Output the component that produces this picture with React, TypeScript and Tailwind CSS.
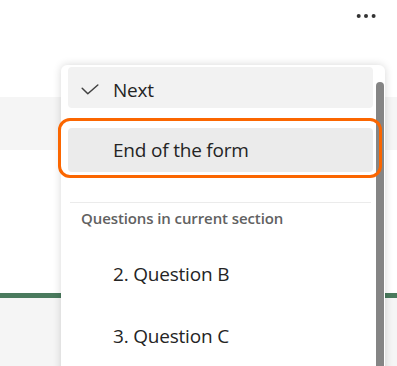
import React from "react";

function Check() {
  return (
    <svg width="18" height="12" viewBox="0 0 18 12" fill="none">
      <path d="M1.2 4.2 L6.8 9.8 L16.8 1" stroke="#424242" strokeWidth="1.5" strokeLinecap="round" strokeLinejoin="round" />
    </svg>
  );
}

export default function App() {
  return (
    <div className="relative w-[397px] h-[366px] overflow-hidden bg-white font-['Open_Sans',sans-serif]">
      <div className="flex flex-col h-full">
        <div className="h-[97px] bg-white flex justify-end pr-[21px] pt-[13px]">
          <svg width="20" height="6" viewBox="0 0 20 6">
            <circle cx="2.7" cy="3" r="2" fill="#333" />
            <circle cx="10" cy="3" r="2" fill="#333" />
            <circle cx="17.6" cy="3" r="2" fill="#333" />
          </svg>
        </div>
        <div className="h-[53px] bg-[#f5f5f5]" />
        <div className="h-[143px] bg-white" />
        <div className="h-[5px] bg-[#4a7a5d]" />
        <div className="flex-1 bg-[#f5f5f5]" />
      </div>

      <div className="absolute left-[61px] top-[65px] w-[324px] h-[320px] bg-white rounded-[6px] shadow-[0_0_9px_rgba(0,0,0,0.16)] flex">
        <div className="w-[315px] flex flex-col pt-[2px] pl-[7px] pr-[3px]">
          <div className="h-[41px] rounded-[4px] bg-[#f2f2f2] flex items-center pl-[13px] pt-[5px] gap-[14px]">
            <Check />
            <span className="text-[19px] text-[#242424] tracking-[-0.2px]">Next</span>
          </div>
          <div className="mt-[20px] h-[44px] rounded-[4px] bg-[#ebebeb] flex items-center pl-[45px]">
            <span className="text-[19px] text-[#242424] tracking-[-0.2px]">End of the form</span>
          </div>
          <div className="mt-[30px] mx-[2px] h-px bg-[#ebebeb]" />
          <div className="h-[31px] flex items-center pl-[13px]">
            <span className="text-[15px] font-semibold text-[#616161] tracking-[-0.1px]">Questions in current section</span>
          </div>
          <div className="mt-[9px] h-[62px] flex items-center pl-[45px]">
            <span className="text-[19px] text-[#242424] tracking-[-0.2px]">2. Question B</span>
          </div>
          <div className="h-[62px] flex items-center pl-[45px]">
            <span className="text-[19px] text-[#242424] tracking-[-0.2px]">3. Question C</span>
          </div>
        </div>
        <div className="w-[8px] pt-[17px]">
          <div className="w-full h-full rounded-t-[4px] bg-[#858585]" />
        </div>

        <div className="absolute left-[-3px] top-[53px] w-[324px] h-[60px] rounded-[12px] border-[3px] border-[#fb6600]" />
      </div>
    </div>
  );
}
